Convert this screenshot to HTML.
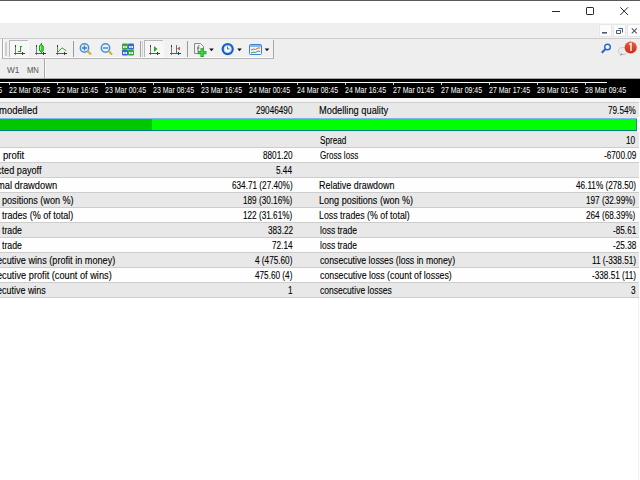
<!DOCTYPE html>
<html><head><meta charset="utf-8"><style>
html,body{margin:0;padding:0;}
body{width:640px;height:480px;overflow:hidden;position:relative;background:#fff;font-family:"Liberation Sans",sans-serif;}
.a{position:absolute;}
#topb{position:absolute;left:0;top:0;width:640px;height:1px;background:#5a5a5a;}
#title{position:absolute;left:0;top:1px;width:640px;height:22px;background:#fff;}
#menu{position:absolute;left:0;top:23px;width:640px;height:15px;background:#efefef;}
#mline{position:absolute;left:0;top:38px;width:640px;height:1px;background:#cdcdcd;}
#tbar{position:absolute;left:0;top:39px;width:640px;height:39px;background:#f0f0f0;}
#tl{position:absolute;left:0;top:78px;width:640px;height:20px;background:#000;border-top:1px solid #a8a8a8;box-sizing:border-box;overflow:hidden;}
.wline{position:absolute;left:0;top:3px;width:607px;height:1px;background:#fff;}
.tick{position:absolute;top:4px;width:1px;height:2px;background:#d0d0d0;}
.tt{position:absolute;top:6px;font-size:9px;line-height:11px;color:#fff;white-space:nowrap;transform-origin:0 0;transform:scaleX(0.775);}
#pre{position:absolute;left:0;top:98px;width:640px;height:4px;background:#f7f7f7;}
#tbl{position:absolute;left:0;top:0;width:639px;height:480px;overflow:hidden;}
.row{position:absolute;left:0;width:639px;height:15px;box-sizing:border-box;border-top:1px solid #cdcdcd;}
.row.g{background:#e8e8e8;}
.row.w{background:#fefefe;}
.sep{position:absolute;left:0;width:639px;height:1px;background:#cdcdcd;}
.gbar{position:absolute;left:0;width:637px;height:15px;box-sizing:border-box;
 background:linear-gradient(to bottom,#efe7de 0,#efe7de 1px,#80b6ef 1px,#80b6ef 2px,#00c800 2px,#00c800 13px,#00807a 13px,#00807a 14px,#dcdcf0 14px);}
.gbar::after{content:"";position:absolute;left:152px;top:2px;right:0;height:11px;background:#00ff00;border-right:1px solid #1a8a8a;}
.lb,.vl{position:absolute;font-size:10px;line-height:14px;height:14px;color:#000;white-space:nowrap;-webkit-text-stroke:0.1px #000;}
.lb{transform-origin:0 0;transform:scaleX(0.88);}
.vl{transform-origin:0 0;transform:scaleX(0.82);}

.row.nb{border-top:0;}

</style></head><body>
<svg width="640" height="102" style="position:absolute;left:0;top:0">
<!-- window border + title -->
<rect x="0" y="0" width="640" height="1" fill="#5a5a5a"/>
<rect x="0" y="1" width="640" height="22" fill="#ffffff"/>
<rect x="552" y="11" width="8" height="1" fill="#2a2a2a"/>
<rect x="586.5" y="7.5" width="7" height="7" rx="0.6" fill="none" stroke="#2a2a2a" stroke-width="1"/>
<path d="M620.3 7.3 L628 15 M628 7.3 L620.3 15" stroke="#2a2a2a" stroke-width="1" fill="none"/>
<!-- menu bar -->
<rect x="0" y="23" width="640" height="15" fill="#efefef"/>
<rect x="598" y="23" width="42" height="15" fill="#f3f3f3"/>
<rect x="599.5" y="24.5" width="12" height="12" fill="#fcfcfc" stroke="#e6e6e6"/>
<rect x="613.5" y="24.5" width="12" height="12" fill="#fcfcfc" stroke="#e6e6e6"/>
<rect x="627.5" y="24.5" width="13" height="12" fill="#fcfcfc" stroke="#e6e6e6"/>
<rect x="602" y="32" width="5" height="1.6" fill="#4b5a6e"/>
<path d="M618.5 28.5 h4 v4 M616.5 30.5 h4 v3 h-4 z" stroke="#4b5a6e" stroke-width="1" fill="none"/>
<rect x="616.5" y="30" width="4" height="1" fill="#4b5a6e"/>
<path d="M631.8 28.3 L636.8 33.3 M636.8 28.3 L631.8 33.3" stroke="#4b5a6e" stroke-width="1.1" fill="none"/>
<rect x="0" y="38" width="640" height="1" fill="#cdcdcd"/>
<!-- toolbar area -->
<rect x="0" y="39" width="640" height="39" fill="#eeeeee"/>
<rect x="0" y="39" width="274" height="19" fill="#f1f1f1"/>
<rect x="0" y="39" width="2" height="19" fill="#f8f8f8"/>
<rect x="2" y="39" width="1" height="20" fill="#a8a8a8"/>
<rect x="3" y="39" width="1" height="19" fill="#ffffff"/>
<rect x="273" y="40" width="1" height="19" fill="#a8a8a8"/>
<rect x="2" y="58" width="272" height="1" fill="#b4b4b4"/>
<rect x="3" y="57" width="270" height="1" fill="#fbfbfb"/>
<!-- grip -->
<rect x="5" y="42" width="2" height="14" fill="#cfcfcf"/>
<!-- pressed button 1 -->
<rect x="9" y="40" width="20" height="17" fill="#f7f7f7"/>
<rect x="9" y="40" width="19" height="1" fill="#b8b8b8"/>
<rect x="9" y="40" width="1" height="17" fill="#b8b8b8"/>
<!-- bar chart icon -->
<g shape-rendering="crispEdges">
<rect x="15" y="45" width="1" height="10" fill="#7a7a7a"/><rect x="15" y="45" width="1" height="2" fill="#3a3a3a"/><rect x="14" y="53" width="9" height="1" fill="#5a5a5a"/><path d="M22 51.5 L24.5 53.5 L22 55.5 Z" fill="#3a3a3a"/>
<rect x="20" y="46" width="1" height="6" fill="#1f9a1f"/>
<rect x="18" y="51" width="2" height="1" fill="#1f9a1f"/>
<rect x="21" y="46" width="1" height="1" fill="#1f9a1f"/>
<!-- candle icon -->
<rect x="36" y="45" width="1" height="10" fill="#7a7a7a"/><rect x="36" y="45" width="1" height="2" fill="#3a3a3a"/><rect x="35" y="53" width="9" height="1" fill="#5a5a5a"/><path d="M43 51.5 L45.5 53.5 L43 55.5 Z" fill="#3a3a3a"/>
<rect x="40.8" y="43" width="1" height="10.5" fill="#0a8a0a"/>
<path d="M39.3 46 L41.3 44.3 L43.3 46 V50.5 L41.3 52.2 L39.3 50.5 Z" fill="#2ad82a" stroke="#109a10" stroke-width="0.7"/>
<rect x="40.3" y="46.3" width="1" height="4" fill="#9af09a"/>
<!-- line icon -->
<rect x="57" y="45" width="1" height="10" fill="#7a7a7a"/><rect x="57" y="45" width="1" height="2" fill="#3a3a3a"/><rect x="56" y="53" width="9" height="1" fill="#5a5a5a"/><path d="M64 51.5 L66.5 53.5 L64 55.5 Z" fill="#3a3a3a"/>
</g>
<path d="M58 52 L62 47.8 L66.3 50.8" stroke="#3aa23a" stroke-width="1" fill="none"/>
<!-- separator -->
<rect x="73" y="41" width="1" height="16" fill="#9a9a9a"/>
<!-- zoom in -->
<circle cx="84.5" cy="48" r="4.2" fill="#e2f1fc" stroke="#4a8fd4" stroke-width="1.5"/>
<path d="M82 48 h5 M84.5 45.5 v5" stroke="#3c7cc0" stroke-width="1.3"/>
<path d="M87.5 51 L91 54.5" stroke="#d8b02a" stroke-width="2.3"/>
<!-- zoom out -->
<circle cx="105.5" cy="48" r="4.2" fill="#e2f1fc" stroke="#4a8fd4" stroke-width="1.5"/>
<path d="M103 48 h5" stroke="#3c7cc0" stroke-width="1.3"/>
<path d="M108.5 51 L112 54.5" stroke="#d8b02a" stroke-width="2.3"/>
<!-- tile -->
<rect x="122" y="43.5" width="6" height="6" rx="1" fill="#36a836"/>
<rect x="128" y="43.5" width="6" height="6" rx="1" fill="#2f6ad8"/>
<rect x="122" y="49.5" width="6" height="6" rx="1" fill="#2f6ad8"/>
<rect x="128" y="49.5" width="6" height="6" rx="1" fill="#36a836"/>
<rect x="123" y="46" width="4" height="2" fill="#f0f8f0"/>
<rect x="129" y="46" width="4" height="2" fill="#eef2fc"/>
<rect x="123" y="52" width="4" height="2" fill="#eef2fc"/>
<rect x="129" y="52" width="4" height="2" fill="#f0f8f0"/>
<rect x="124.6" y="46" width="0.8" height="2" fill="#6a9a6a"/>
<rect x="130.6" y="46" width="0.8" height="2" fill="#6a80b0"/>
<rect x="124.6" y="52" width="0.8" height="2" fill="#6a80b0"/>
<rect x="130.6" y="52" width="0.8" height="2" fill="#6a9a6a"/>
<!-- separator double -->
<rect x="140" y="41" width="1" height="16" fill="#a0a0a0"/>
<rect x="142" y="41" width="1" height="16" fill="#d0d0d0"/>
<!-- pressed button 2 -->
<rect x="144" y="40" width="20" height="17" fill="#f7f7f7"/>
<rect x="144" y="40" width="19" height="1" fill="#b8b8b8"/>
<rect x="144" y="40" width="1" height="17" fill="#b8b8b8"/>
<g shape-rendering="crispEdges">
<rect x="150" y="45" width="1" height="10" fill="#7a7a7a"/><rect x="150" y="45" width="1" height="2" fill="#3a3a3a"/><rect x="149" y="53" width="9" height="1" fill="#5a5a5a"/><path d="M157 51.5 L159.5 53.5 L157 55.5 Z" fill="#3a3a3a"/><rect x="171" y="45" width="1" height="10" fill="#7a7a7a"/><rect x="171" y="45" width="1" height="2" fill="#3a3a3a"/><rect x="170" y="53" width="9" height="1" fill="#5a5a5a"/><path d="M178 51.5 L180.5 53.5 L178 55.5 Z" fill="#3a3a3a"/>
<rect x="176" y="45" width="1" height="8" fill="#2d7dc0"/>
</g>
<path d="M154 46 L157.5 49 L154 52 Z" fill="#22b022"/>
<path d="M177 48.5 L180 46.5 L180 50.5 Z" fill="#e0561a"/>
<!-- separator -->
<rect x="187" y="41" width="1" height="16" fill="#9a9a9a"/>
<!-- indicators -->
<path d="M194.5 43.5 h6 l3 3 v7 h-9 z" fill="#f2f2f2" stroke="#8a8a8a" stroke-linejoin="round"/><path d="M199.5 45.5 q-1.5 0 -1.5 2 v4 M197 48 h2.5" stroke="#555" stroke-width="0.8" fill="none"/>
<path d="M197.8 52.6 h8.6 M202.1 48.3 v8.6" stroke="#1a9a1a" stroke-width="3.2"/><path d="M198.4 52.6 h7.4 M202.1 48.9 v7.4" stroke="#3ad23a" stroke-width="2"/>
<path d="M209.2 48.6 h4.6 l-2.3 2.6 z" fill="#111"/>
<!-- clock -->
<circle cx="227.7" cy="49.1" r="5" fill="#f6fbff" stroke="#1a5fc0" stroke-width="2.3"/><circle cx="227.7" cy="49.1" r="3.6" fill="none" stroke="#8fc0f0" stroke-width="0.6"/>
<path d="M227.5 46.5 v2.5 h2" stroke="#556" stroke-width="0.9" fill="none"/>
<path d="M237.2 48.6 h4.6 l-2.3 2.6 z" fill="#111"/>
<!-- template -->
<rect x="249.5" y="44.5" width="12" height="10" rx="1" fill="#eef5fd" stroke="#3f7ed0"/>
<rect x="250" y="45" width="11" height="2" fill="#8fb8e8"/>
<path d="M251 50 l2.5 -1 l2 0.5 l2.5 -1.5 l2 0" stroke="#d8602a" stroke-width="1" fill="none"/>
<path d="M251 53 l2.5 -1 l2 0.5 l2.5 -1.5 l2 0.5" stroke="#2ea02e" stroke-width="1" fill="none"/>
<path d="M264.7 48.6 h4.6 l-2.3 2.6 z" fill="#111"/>
<!-- right icons -->
<circle cx="607.5" cy="47" r="2.8" fill="#f4f8ff" stroke="#2a62cf" stroke-width="1.4"/>
<path d="M605.3 49.3 L601.8 52.8" stroke="#2a62cf" stroke-width="2"/>
<ellipse cx="623" cy="51" rx="4.5" ry="3.5" fill="#ececec" stroke="#c4c4c4" stroke-width="0.8"/>
<path d="M621 53.5 L620 56 L623.5 54" fill="#9a9a9a"/>
<defs><linearGradient id="bg1" x1="0" y1="0" x2="0" y2="1"><stop offset="0" stop-color="#f05a3a"/><stop offset="1" stop-color="#cc2a18"/></linearGradient></defs>
<circle cx="630.7" cy="47.5" r="6.1" fill="url(#bg1)"/>
<path d="M629.2 44.5 L631 43.5 V51" stroke="#fff" stroke-width="1.4" fill="none"/>
<!-- second toolbar row -->
<rect x="44" y="59" width="1" height="19" fill="#a8a8a8"/>
<rect x="45" y="59" width="1" height="19" fill="#fafafa"/>
</svg>
<div style="position:absolute;left:7px;top:65px;font-size:9px;line-height:11px;color:#555;transform-origin:0 0;transform:scaleX(0.92)">W1</div>
<div style="position:absolute;left:27px;top:65px;font-size:9px;line-height:11px;color:#555;transform-origin:0 0;transform:scaleX(0.85)">MN</div>
<div id="pre"></div>

<div id="tl">
<div class="wline"></div>
<span class="tt" style="left:-39px">22 Mar 00:45</span><div class="tick" style="left:9px"></div><span class="tt" style="left:9px">22 Mar 08:45</span><div class="tick" style="left:57px"></div><span class="tt" style="left:57px">22 Mar 16:45</span><div class="tick" style="left:105px"></div><span class="tt" style="left:105px">23 Mar 00:45</span><div class="tick" style="left:153px"></div><span class="tt" style="left:153px">23 Mar 08:45</span><div class="tick" style="left:201px"></div><span class="tt" style="left:201px">23 Mar 16:45</span><div class="tick" style="left:249px"></div><span class="tt" style="left:249px">24 Mar 00:45</span><div class="tick" style="left:297px"></div><span class="tt" style="left:297px">24 Mar 08:45</span><div class="tick" style="left:345px"></div><span class="tt" style="left:345px">24 Mar 16:45</span><div class="tick" style="left:393px"></div><span class="tt" style="left:393px">27 Mar 01:45</span><div class="tick" style="left:441px"></div><span class="tt" style="left:441px">27 Mar 09:45</span><div class="tick" style="left:489px"></div><span class="tt" style="left:489px">27 Mar 17:45</span><div class="tick" style="left:537px"></div><span class="tt" style="left:537px">28 Mar 01:45</span><div class="tick" style="left:585px"></div><span class="tt" style="left:585px">28 Mar 09:45</span>
</div>
<div id="tbl">
<div class="row g" style="top:102px"></div>
<span class="lb" style="left:-0.95px;top:103.5px;transform:scaleX(0.9487)">modelled</span>
<span class="vl" style="left:256.12px;top:103.5px;transform:scaleX(0.82)">29046490</span>
<span class="lb" style="left:318.97px;top:103.5px;transform:scaleX(0.9284)">Modelling quality</span>
<span class="vl" style="left:607.62px;top:103.5px;transform:scaleX(0.82)">79.54%</span>
<div class="gbar" style="top:117px"></div>
<div class="row g nb" style="top:132px"></div>
<span class="lb" style="left:319.90px;top:133.5px;transform:scaleX(0.8156)">Spread</span>
<span class="vl" style="left:626.48px;top:133.5px;transform:scaleX(0.82)">10</span>
<div class="row w" style="top:147px"></div>
<span class="lb" style="left:2.50px;top:148.5px;transform:scaleX(0.9545)">profit</span>
<span class="vl" style="left:262.68px;top:148.5px;transform:scaleX(0.82)">8801.20</span>
<span class="lb" style="left:319.90px;top:148.5px;transform:scaleX(0.8106)">Gross loss</span>
<span class="vl" style="left:603.52px;top:148.5px;transform:scaleX(0.82)">-6700.09</span>
<div class="row g" style="top:162px"></div>
<span class="lb" style="left:-3.50px;top:163.5px;transform:scaleX(0.9133)">cted payoff</span>
<span class="vl" style="left:275.80px;top:163.5px;transform:scaleX(0.82)">5.44</span>
<div class="row w" style="top:177px"></div>
<span class="lb" style="left:-3.43px;top:178.5px;transform:scaleX(0.9325)">mal drawdown</span>
<span class="vl" style="left:232.34px;top:178.5px;transform:scaleX(0.82)">634.71 (27.40%)</span>
<span class="lb" style="left:319.01px;top:178.5px;transform:scaleX(0.8928)">Relative drawdown</span>
<span class="vl" style="left:575.64px;top:178.5px;transform:scaleX(0.82)">46.11% (278.50)</span>
<div class="row g" style="top:192px"></div>
<span class="lb" style="left:1.75px;top:193.5px;transform:scaleX(0.9071)">positions (won %)</span>
<span class="vl" style="left:243.00px;top:193.5px;transform:scaleX(0.82)">189 (30.16%)</span>
<span class="lb" style="left:318.99px;top:193.5px;transform:scaleX(0.9054)">Long positions (won %)</span>
<span class="vl" style="left:586.30px;top:193.5px;transform:scaleX(0.82)">197 (32.99%)</span>
<div class="row w" style="top:207px"></div>
<span class="lb" style="left:2.00px;top:208.5px;transform:scaleX(0.9038)">trades (% of total)</span>
<span class="vl" style="left:243.00px;top:208.5px;transform:scaleX(0.82)">122 (31.61%)</span>
<span class="lb" style="left:319.02px;top:208.5px;transform:scaleX(0.8822)">Loss trades (% of total)</span>
<span class="vl" style="left:586.30px;top:208.5px;transform:scaleX(0.82)">264 (68.39%)</span>
<div class="row g" style="top:222px"></div>
<span class="lb" style="left:2.00px;top:223.5px;transform:scaleX(0.8739)">trade</span>
<span class="vl" style="left:267.60px;top:223.5px;transform:scaleX(0.82)">383.22</span>
<span class="lb" style="left:319.90px;top:223.5px;transform:scaleX(0.8512)">loss trade</span>
<span class="vl" style="left:612.54px;top:223.5px;transform:scaleX(0.82)">-85.61</span>
<div class="row w" style="top:237px"></div>
<span class="lb" style="left:2.00px;top:238.5px;transform:scaleX(0.8739)">trade</span>
<span class="vl" style="left:271.70px;top:238.5px;transform:scaleX(0.82)">72.14</span>
<span class="lb" style="left:319.90px;top:238.5px;transform:scaleX(0.8512)">loss trade</span>
<span class="vl" style="left:612.54px;top:238.5px;transform:scaleX(0.82)">-25.38</span>
<div class="row g" style="top:252px"></div>
<span class="lb" style="left:-3.00px;top:253.5px;transform:scaleX(0.9132)">ecutive wins (profit in money)</span>
<span class="vl" style="left:255.30px;top:253.5px;transform:scaleX(0.82)">4 (475.60)</span>
<span class="lb" style="left:319.90px;top:253.5px;transform:scaleX(0.8740)">consecutive losses (loss in money)</span>
<span class="vl" style="left:592.04px;top:253.5px;transform:scaleX(0.82)">11 (-338.51)</span>
<div class="row w" style="top:267px"></div>
<span class="lb" style="left:-3.00px;top:268.5px;transform:scaleX(0.9214)">ecutive profit (count of wins)</span>
<span class="vl" style="left:255.30px;top:268.5px;transform:scaleX(0.82)">475.60 (4)</span>
<span class="lb" style="left:319.90px;top:268.5px;transform:scaleX(0.8815)">consecutive loss (count of losses)</span>
<span class="vl" style="left:592.04px;top:268.5px;transform:scaleX(0.82)">-338.51 (11)</span>
<div class="row g" style="top:282px"></div>
<span class="lb" style="left:-3.00px;top:283.5px;transform:scaleX(0.8963)">ecutive wins</span>
<span class="vl" style="left:288.10px;top:283.5px;transform:scaleX(0.82)">1</span>
<span class="lb" style="left:319.90px;top:283.5px;transform:scaleX(0.8554)">consecutive losses</span>
<span class="vl" style="left:631.40px;top:283.5px;transform:scaleX(0.82)">3</span>
<div class="sep" style="top:297px"></div>
</div>
<div style="position:absolute;left:638px;top:298px;width:1px;height:182px;background:#f1f1f1"></div>
<div>
</div>
</body></html>
